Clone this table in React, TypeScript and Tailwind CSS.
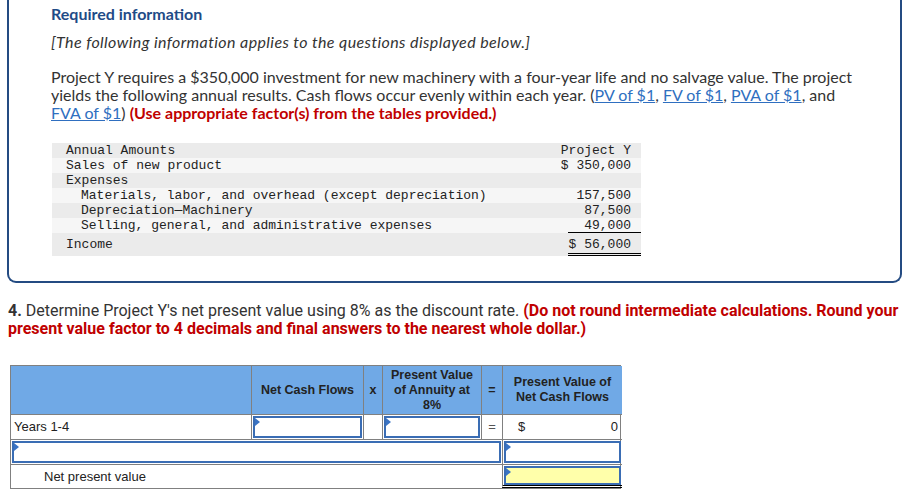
import React from 'react';

const ROWS: { label: string; value: string; indent?: boolean; rule?: 'single' | 'double' }[] = [
    { label: 'Annual Amounts', value: 'Project Y' },
    { label: 'Sales of new product', value: '$ 350,000' },
    { label: 'Expenses', value: '' },
    { label: 'Materials, labor, and overhead (except depreciation)', value: '157,500', indent: true },
    { label: 'Depreciation\u2014Machinery', value: '87,500', indent: true },
    { label: 'Selling, general, and administrative expenses', value: '49,000', indent: true, rule: 'single' },
    { label: 'Income', value: '$ 56,000', rule: 'double' },
];

function Marker() {
    return <span className="absolute left-0 top-0 w-0 h-0 border-y-[4px] border-y-transparent border-l-[5px] border-l-[#3a73c4]" />;
}

function Field({ yellow = false }: { yellow?: boolean }) {
    return (
        <div className={`relative h-full border-2 border-[#3a6db4] ${yellow ? 'bg-[#ffffaa]' : 'bg-white'}`}>
            <Marker />
        </div>
    );
}

export default function App() {
    const sans = { fontFamily: 'Lato, "Open Sans", sans-serif' };
    return (
        <div className="w-[915px] h-[499px] bg-white overflow-hidden text-[#333]" style={sans}>
            {/* Required information box */}
            <div className="mx-[7px] w-[895px] h-[283px] border-x-2 border-b-2 border-[#244b82] rounded-b-[9px] pl-[42px] pr-[45px] pt-[4px]">
                <div className="text-[16px] leading-[20px] font-bold text-[#1f4b87]">Required information</div>
                <div className="mt-[8px] text-[16px] leading-[20px] italic tracking-[0.4px] whitespace-nowrap">[The following information applies to the questions displayed below.]</div>
                <p className="mt-[16px] text-[16px] leading-[18px]">
                    Project Y requires a $350,000 investment for new machinery with a four-year life and no salvage value. The project yields the following annual results. Cash flows occur evenly within each year. (<span className="text-[#2f6fc0] underline">PV of $1</span>, <span className="text-[#2f6fc0] underline">FV of $1</span>, <span className="text-[#2f6fc0] underline">PVA of $1</span>, and <span className="text-[#2f6fc0] underline">FVA of $1</span>) <span className="font-bold text-[#c00000]">(Use appropriate factor(s) from the tables provided.)</span>
                </p>
                <div className="mt-[21px] ml-[1px] w-[589px] bg-[#f4f4f4] text-[13px] leading-[15px] text-[#222]" style={{ fontFamily: '"Liberation Mono", monospace' }}>
                    {ROWS.map((r, i) => (
                        <div key={r.label} className={`flex whitespace-nowrap ${i % 2 === 0 ? 'bg-[#ebebeb]' : 'bg-[#f6f6f6]'} ${r.rule === 'double' ? 'h-[23px] pt-[4px]' : 'h-[15px]'}`}>
                            <div className={`flex-1 ${r.indent ? 'pl-[29px]' : 'pl-[14px]'}`}>{r.label}</div>
                            <div className={`w-[73px] pr-[10px] flex justify-end ${r.rule === 'single' ? 'border-b border-black' : ''} ${r.rule === 'double' ? 'border-b-[3px] border-double border-black' : ''}`}>{r.value}</div>
                        </div>
                    ))}
                </div>
            </div>

            {/* Question 4 */}
            <p className="mt-[19px] ml-[8px] mr-[10px] text-[16px] leading-[18px]" style={{ fontFamily: 'Roboto, sans-serif' }}>
                <span className="font-bold">4.</span> Determine Project Y's net present value using 8% as the discount rate. <span className="font-bold text-[#c00000]">(Do not round intermediate calculations. Round your present value factor to 4 decimals and final answers to the nearest whole dollar.)</span>
            </p>

            <div className="mt-[27px] ml-[10px] w-[611px] text-[12.5px] text-[#222]" style={{ fontFamily: '"Liberation Sans", Arial, sans-serif' }}>
                <div className="grid grid-cols-[240px_112px_19px_99px_21px_120px] border border-[#808080]">
                    {/* header */}
                    <div className="h-[48px] bg-[#70a9e6]" />
                    <div className="h-[48px] bg-[#70a9e6] border-l border-[#808080] flex items-center justify-center font-bold">Net Cash Flows</div>
                    <div className="h-[48px] bg-[#70a9e6] border-l border-[#808080] flex items-center justify-center font-bold">x</div>
                    <div className="h-[48px] bg-[#70a9e6] border-l border-[#808080] flex items-center justify-center text-center font-bold leading-[15px]">Present Value<br />of Annuity at<br />8%</div>
                    <div className="h-[48px] bg-[#70a9e6] border-l border-[#808080] flex items-center justify-center font-bold">=</div>
                    <div className="h-[48px] bg-[#70a9e6] border-l border-[#808080] flex items-center justify-center text-center font-bold leading-[15px]">Present Value of<br />Net Cash Flows</div>

                    {/* Years 1-4 */}
                    <div className="h-[25px] border-t border-[#808080] pl-[3px] flex items-center text-[13px]">Years 1-4</div>
                    <div className="h-[25px] border-t border-l border-[#808080] p-[1px]"><Field /></div>
                    <div className="h-[25px] border-t border-l border-[#808080]" />
                    <div className="h-[25px] border-t border-l border-[#808080] p-[1px]"><Field /></div>
                    <div className="h-[25px] border-t border-l border-[#808080] flex items-center justify-center text-[13px] text-[#555]">=</div>
                    <div className="h-[25px] border-t border-l border-[#808080] flex items-center justify-between px-[15px] pr-[4px] text-[13px]"><span>$</span><span>0</span></div>

                    {/* blank entry row */}
                    <div className="col-span-5 h-[25px] border-t border-[#808080] p-[1px]"><Field /></div>
                    <div className="h-[25px] border-t border-l border-[#808080] p-[1px]"><Field /></div>

                    {/* Net present value */}
                    <div className="col-span-5 h-[24px] border-t border-[#808080] pl-[33px] flex items-center text-[13px]">Net present value</div>
                    <div className="h-[24px] border-t border-l border-[#808080] p-[1px] pb-0 border-b-[3px] border-b-black border-double"><Field yellow /></div>
                </div>
            </div>
        </div>
    );
}
